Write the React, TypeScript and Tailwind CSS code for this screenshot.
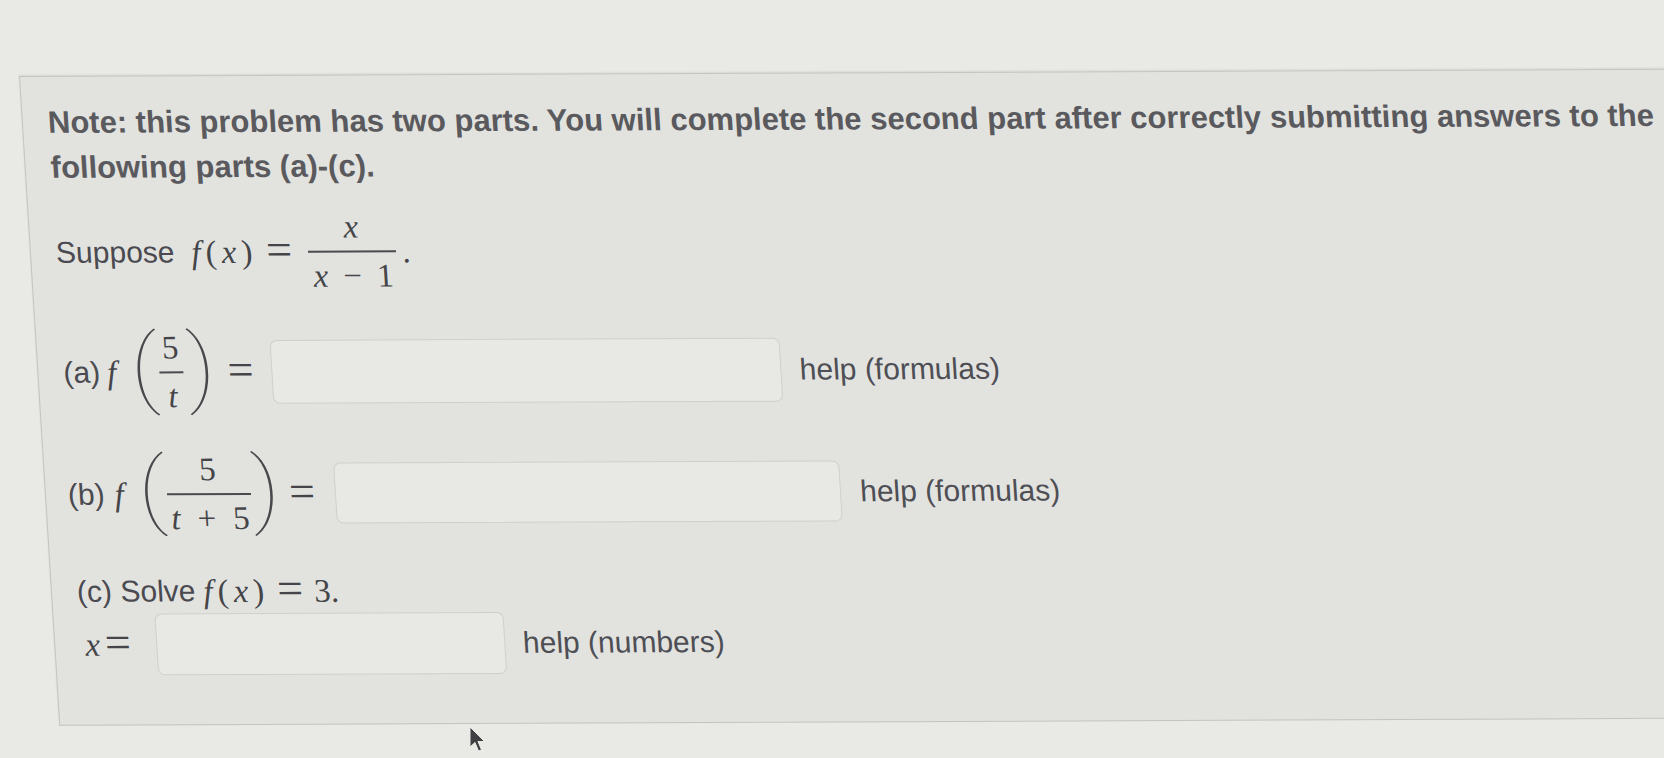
import React from "react";

const MATH = "font-['Liberation_Serif',serif] text-[33px] leading-[34px] text-[#454549] flex items-center";

function I({ children, className = "" }: { children: React.ReactNode; className?: string }) {
  return <span className={"italic " + className}>{children}</span>;
}

function Eq({ className = "" }: { className?: string }) {
  return (
    <span className={"relative -top-[2px] font-['Liberation_Serif',serif] text-[46px] leading-[34px] " + className}>=</span>
  );
}

function Paren({ h, side, className = "" }: { h: number; side: "l" | "r"; className?: string }) {
  const d =
    side === "l"
      ? `M20 1 C-5 ${h * 0.2} -5 ${h * 0.8} 20 ${h - 1} L21.3 ${h - 2} C-2 ${h * 0.8} -2 ${h * 0.2} 21.3 2 Z`
      : `M2 1 C27 ${h * 0.2} 27 ${h * 0.8} 2 ${h - 1} L0.7 ${h - 2} C24 ${h * 0.8} 24 ${h * 0.2} 0.7 2 Z`;
  return (
    <svg width={22} height={h} viewBox={`0 0 22 ${h}`} className={"shrink-0 " + className}>
      <path d={d} fill="#48484d" />
    </svg>
  );
}

function Frac({
  num,
  den,
  pad,
  className = "",
}: {
  num: React.ReactNode;
  den: React.ReactNode;
  pad: string;
  className?: string;
}) {
  return (
    <span className={"inline-flex flex-col items-center " + className}>
      <span className={"leading-[34px] pb-[7px] " + pad}>{num}</span>
      <span className="h-[2px] self-stretch bg-[#4a4a4f]" />
      <span className={"leading-[34px] pt-[6px] flex items-center " + pad}>{den}</span>
    </span>
  );
}

function Box({ className = "" }: { className?: string }) {
  return (
    <input
      readOnly
      aria-label="answer"
      className={"block shrink-0 rounded-[7px] border border-[#cfd0cb] bg-[#e8e8e5] " + className}
    />
  );
}

export default function App() {
  return (
    <div className="relative w-[1664px] h-[758px] overflow-hidden bg-[#e9e9e6] font-['Liberation_Sans',Arial,sans-serif]">
      <div className="pt-[76px] pl-[19px]">
        <div className="origin-top-left skew-x-[3.3deg] rotate-[-0.25deg] w-[1720px] border-t border-l border-b border-[#c4c5c1] bg-[#e2e3df] pl-[25px] pt-[23px] pb-[49px] shadow-[0_-1px_2px_rgba(0,0,0,0.08)]">
          <p className="text-[31px] leading-[45px] font-bold text-[#5a5a5e] whitespace-nowrap">
            Note: this problem has two parts. You will complete the second part after correctly submitting answers to the
            <br />
            following parts (a)-(c).
          </p>

          <div className="mt-[21px] flex items-center text-[#4a4a50]">
            <span className="text-[30px] leading-[30px]">Suppose</span>
            <span className={MATH}>
              <I className="ml-[17px]">f</I>
              <span className="ml-[5px]">(</span>
              <I className="mx-[5px]">x</I>
              <span>)</span>
              <Eq className="ml-[14px]" />
              <Frac
                className="ml-[16px]"
                pad="px-[4px]"
                num={<I>x</I>}
                den={
                  <>
                    <I>x</I>
                    <span className="mx-[15px]">−</span>
                    <span>1</span>
                  </>
                }
              />
              <span className="ml-[6px]">.</span>
            </span>
          </div>

          <div className="mt-[34px] flex items-center text-[#4a4a50]">
            <span className="text-[30px] leading-[30px]">(a)</span>
            <span className={MATH}>
              <I className="ml-[7px]">f</I>
              <Paren h={89} side="l" className="ml-[20px]" />
              <Frac className="ml-[1px]" pad="px-[4px]" num={<span>5</span>} den={<I>t</I>} />
              <Paren h={89} side="r" className="ml-[4px]" />
              <Eq className="ml-[18px]" />
            </span>
            <Box className="ml-[18px] w-[510px] h-[64px]" />
            <span className="ml-[18px] text-[30px] leading-[30px] text-[#4e4e55]">help (formulas)</span>
          </div>

          <div className="mt-[34px] -ml-[3px] flex items-center text-[#4a4a50]">
            <span className="text-[30px] leading-[30px]">(b)</span>
            <span className={MATH}>
              <I className="ml-[10px]">f</I>
              <Paren h={87} side="l" className="ml-[20px]" />
              <Frac
                className="ml-[1px]"
                pad="px-[3px]"
                num={<span>5</span>}
                den={
                  <>
                    <I>t</I>
                    <span className="mx-[17px]">+</span>
                    <span>5</span>
                  </>
                }
              />
              <Paren h={87} side="r" className="ml-[1px]" />
              <Eq className="ml-[15px]" />
            </span>
            <Box className="ml-[20px] w-[506px] h-[61px]" />
            <span className="ml-[19px] text-[30px] leading-[30px] text-[#4e4e55]">help (formulas)</span>
          </div>

          <div className="mt-[37px] flex items-center text-[#4a4a50]">
            <span className="text-[30px] leading-[30px]">(c) Solve</span>
            <span className={MATH}>
              <I className="ml-[8px]">f</I>
              <span className="ml-[5px]">(</span>
              <I className="mx-[5px]">x</I>
              <span>)</span>
              <Eq className="ml-[13px]" />
              <span className="ml-[11px]">3.</span>
            </span>
          </div>

          <div className="mt-[5px] flex items-center text-[#4a4a50]">
            <span className={MATH}>
              <I className="ml-[5px]">x</I>
              <Eq className="ml-[5px]" />
            </span>
            <Box className="ml-[25px] w-[349px] h-[62px]" />
            <span className="ml-[18px] text-[30px] leading-[30px] text-[#4e4e55]">help (numbers)</span>
          </div>
        </div>
      </div>

      <svg className="absolute left-[468px] top-[726px]" width="18" height="28" viewBox="0 0 18 28">
        <path d="M2 1 L2 21 L7 16.5 L10.5 25 L13.5 23.8 L10 15.5 L16.5 15.5 Z" fill="#3f3f44" stroke="#e9e9e6" strokeWidth="1" />
      </svg>
    </div>
  );
}
